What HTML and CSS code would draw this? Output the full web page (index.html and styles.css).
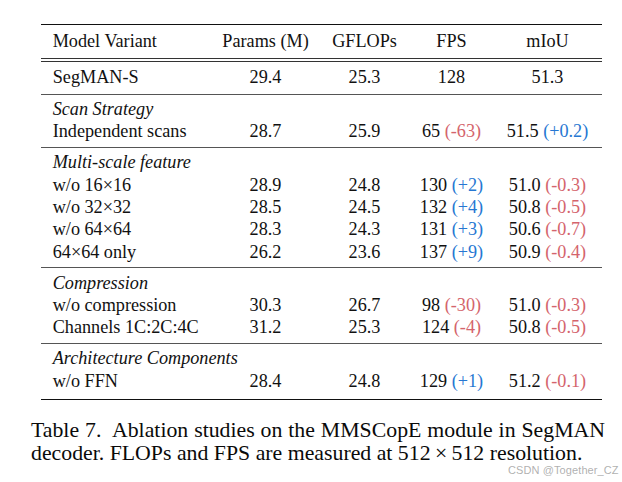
FILE: index.html
```html
<!DOCTYPE html>
<html>
<head>
<meta charset="utf-8">
<link rel="stylesheet" href="styles.css">
</head>
<body>
<div class="page">
  <div class="ablation">
    <div class="group head">
      <div class="row">
        <span class="name">Model Variant</span>
        <span>Params (M)</span>
        <span>GFLOPs</span>
        <span>FPS</span>
        <span>mIoU</span>
      </div>
    </div>
    <div class="group base">
      <div class="row">
        <span class="name">SegMAN-S</span><span>29.4</span><span>25.3</span><span>128</span><span>51.3</span>
      </div>
    </div>
    <div class="group">
      <div class="row"><span class="name sec">Scan Strategy</span></div>
      <div class="row">
        <span class="name">Independent scans</span><span>28.7</span><span>25.9</span>
        <span>65 <span class="neg">(-63)</span></span><span>51.5 <span class="pos">(+0.2)</span></span>
      </div>
    </div>
    <div class="group">
      <div class="row"><span class="name sec">Multi-scale feature</span></div>
      <div class="row">
        <span class="name">w/o 16×16</span><span>28.9</span><span>24.8</span>
        <span>130 <span class="pos">(+2)</span></span><span>51.0 <span class="neg">(-0.3)</span></span>
      </div>
      <div class="row">
        <span class="name">w/o 32×32</span><span>28.5</span><span>24.5</span>
        <span>132 <span class="pos">(+4)</span></span><span>50.8 <span class="neg">(-0.5)</span></span>
      </div>
      <div class="row">
        <span class="name">w/o 64×64</span><span>28.3</span><span>24.3</span>
        <span>131 <span class="pos">(+3)</span></span><span>50.6 <span class="neg">(-0.7)</span></span>
      </div>
      <div class="row">
        <span class="name">64×64 only</span><span>26.2</span><span>23.6</span>
        <span>137 <span class="pos">(+9)</span></span><span>50.9 <span class="neg">(-0.4)</span></span>
      </div>
    </div>
    <div class="group">
      <div class="row"><span class="name sec">Compression</span></div>
      <div class="row">
        <span class="name">w/o compression</span><span>30.3</span><span>26.7</span>
        <span>98 <span class="neg">(-30)</span></span><span>51.0 <span class="neg">(-0.3)</span></span>
      </div>
      <div class="row">
        <span class="name">Channels 1C:2C:4C</span><span>31.2</span><span>25.3</span>
        <span>124 <span class="neg">(-4)</span></span><span>50.8 <span class="neg">(-0.5)</span></span>
      </div>
    </div>
    <div class="group final">
      <div class="row"><span class="name sec">Architecture Components</span></div>
      <div class="row">
        <span class="name">w/o FFN</span><span>28.4</span><span>24.8</span>
        <span>129 <span class="pos">(+1)</span></span><span>51.2 <span class="neg">(-0.1)</span></span>
      </div>
    </div>
  </div>
  <p class="caption">Table 7.&nbsp; Ablation studies on the MMSCopE module in SegMAN decoder. FLOPs and FPS are measured at <span class="math">512&#8201;×&#8201;512</span> resolution.</p>
  <div class="watermark">CSDN @Together_CZ</div>
</div>
</body>
</html>
```

FILE: styles.css
```css
html, body {
  margin: 0;
  padding: 0;
  background: #ffffff;
}

.page {
  position: relative;
  width: 622px;
  height: 482px;
  padding: 24px 0 0 31px;
  box-sizing: border-box;
  font-family: "Liberation Serif", "Tinos", "Times New Roman", "DejaVu Serif", serif;
  color: #111;
}

.ablation {
  margin-left: 10px;
  width: 561px;
  font-size: 18.2px;
  line-height: 22.33px;
  border-top: 1px solid #111;
  border-bottom: 1px solid #111;
}

.row {
  display: grid;
  grid-template-columns: 171px 107px 91px 83px 109px;
  white-space: nowrap;
}

.row > span {
  text-align: center;
}

.row > .name {
  text-align: left;
  padding-left: 11.7px;
}

.row > .sec {
  grid-column: 1 / -1;
  font-style: italic;
}

.group {
  border-top: 1px solid #555;
  padding: 3.5px 0 4.1px;
}

.group.head {
  border-top: none;
  padding: 5px 0 5.6px;
  border-bottom: 4px double #333;
}

.group.head + .group {
  border-top: none;
}

.group.base {
  padding: 4.2px 0 5.2px;
}

.group.final {
  padding-bottom: 7.2px;
}

.neg { color: #d4646c; }
.pos { color: #2677d2; }

.caption {
  margin: 19px 0 0 0;
  width: 574px;
  font-size: 21.8px;
  line-height: 23.3px;
  text-align: justify;
  text-align-last: left;
  color: #0a0a0a;
}

.math {
  font-family: "Liberation Serif", "Tinos", serif;
}

.watermark {
  position: absolute;
  left: 508px;
  top: 464px;
  white-space: nowrap;
  font-family: "Liberation Sans", Arial, sans-serif;
  font-size: 11px;
  color: rgba(150, 150, 150, 0.75);
  letter-spacing: 0.1px;
}
```
